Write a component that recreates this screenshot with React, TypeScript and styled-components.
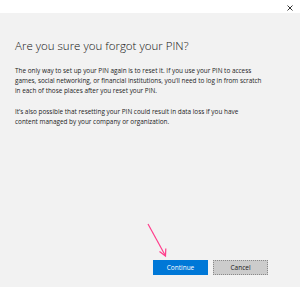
import React from 'react';
import styled, { createGlobalStyle } from 'styled-components';

const GlobalStyle = createGlobalStyle`
  html, body {
    margin: 0;
    padding: 0;
    background: #f2f2f2;
  }
  body {
    font-family: 'Open Sans', 'Noto Sans', sans-serif;
  }
`;

export default function App() {
  return (
    <>
      <GlobalStyle />
      <Window>
        <TitleBar>
          <CloseButton aria-label="Close">
            <svg width="6" height="6" viewBox="0 0 6 6">
              <path d="M0.5 0.5 L5.5 5.5 M5.5 0.5 L0.5 5.5" stroke="#333" strokeWidth="1" />
            </svg>
          </CloseButton>
        </TitleBar>
        <Body>
          <Heading>Are you sure you forgot your PIN?</Heading>
          <Paragraph>
            The only way to set up your PIN again is to reset it. If you use your PIN to access
            <br />
            games, social networking, or financial institutions, you’ll need to log in from scratch
            <br />
            in each of those places after you reset your PIN.
          </Paragraph>
          <Paragraph>
            It’s also possible that resetting your PIN could result in data loss if you have
            <br />
            content managed by your company or organization.
          </Paragraph>
        </Body>
        <Footer>
          <Arrow width="24" height="36" viewBox="0 0 24 36">
            <path d="M2 1 L19 32" stroke="#ff3d8b" strokeWidth="1.2" fill="none" />
            <path d="M13.5 28.5 L19.5 33 L19.8 25.5" stroke="#ff3d8b" strokeWidth="1.2" fill="none" />
          </Arrow>
          <Button primary>Continue</Button>
          <Button>Cancel</Button>
        </Footer>
      </Window>
    </>
  );
}

const Window = styled.div`
  width: 300px;
  height: 287px;
  display: flex;
  flex-direction: column;
  background: #f2f2f2;
  overflow: hidden;
`;

const TitleBar = styled.div`
  height: 13px;
  background: #ffffff;
  display: flex;
  justify-content: flex-end;
  align-items: center;
  padding-right: 7px;
`;

const CloseButton = styled.div`
  display: flex;
  margin-top: 3px;
`;

const Body = styled.div`
  flex: 1;
  padding: 25px 15px 0 15px;
  color: #1a1a1a;
`;

const Heading = styled.h1`
  margin: 0 0 12px 0;
  font-weight: 300;
  font-size: 11.5px;
  line-height: 16px;
  color: #111;
`;

const Paragraph = styled.p`
  margin: 0 0 11px 0;
  white-space: nowrap;
  font-size: 6.4px;
  line-height: 10px;
  color: #222;
`;

const Footer = styled.div`
  position: relative;
  display: flex;
  justify-content: flex-end;
  gap: 5px;
  padding: 0 32px 12px 0;
`;

const Arrow = styled.svg`
  position: absolute;
  left: 146px;
  bottom: 28px;
`;

const Button = styled.div<{ primary?: boolean }>`
  width: 55px;
  height: 15px;
  box-sizing: border-box;
  display: flex;
  align-items: center;
  justify-content: center;
  font-size: 6.5px;
  color: ${({ primary }) => (primary ? '#ffffff' : '#1a1a1a')};
  background: ${({ primary }) => (primary ? '#0078d7' : '#cccccc')};
  border: 1px ${({ primary }) => (primary ? 'solid #0078d7' : 'dotted #8a8a8a')};
`;
